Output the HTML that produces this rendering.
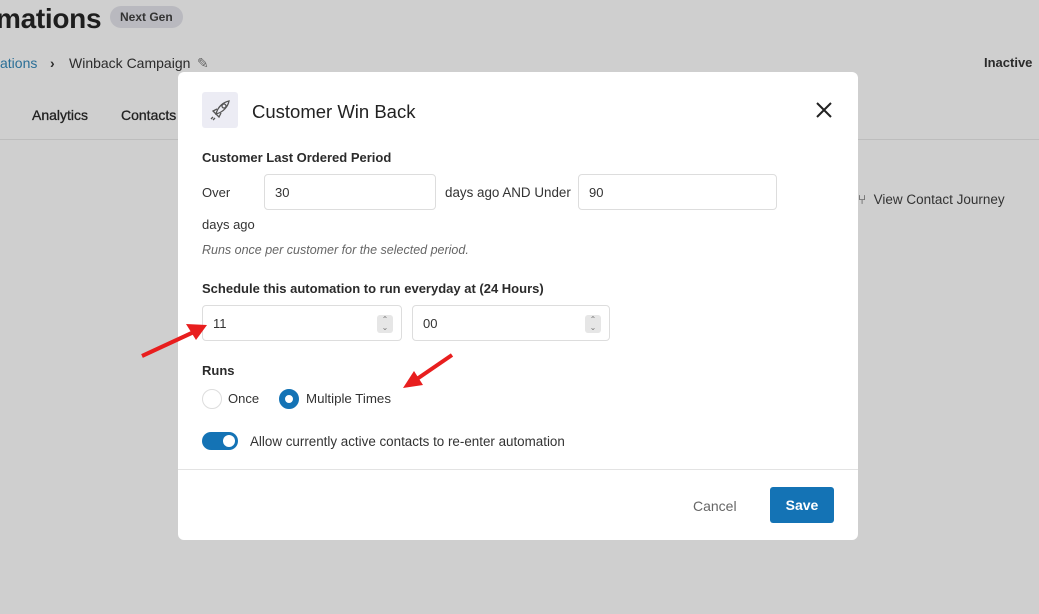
<!DOCTYPE html>
<html><head><meta charset="utf-8"><style>
*{box-sizing:border-box;margin:0;padding:0}
body{width:1039px;height:614px;overflow:hidden;background:#cfcfcf;font-family:"Liberation Sans",sans-serif;color:#2b2b2b;position:relative}
.abs{position:absolute}
.h1{left:-4px;top:3px;font-size:28px;font-weight:bold;color:#1e1e1e;letter-spacing:-0.3px}
.badge{left:110px;top:6px;background:#b9b9bf;border-radius:12px;padding:4px 10px;font-size:12px;font-weight:bold;color:#333}
.crumb{top:55px;font-size:14px}
.tabs{top:107px;font-size:14px;color:#222;-webkit-text-stroke:0.3px #222}
.hr{left:0;top:139px;width:1039px;height:1px;background:#bdbdbd}
.modal{left:178px;top:72px;width:680px;height:468px;background:#fff;border-radius:6px}
.lbl{font-size:13px;font-weight:bold;color:#2b2b2b}
.t{font-size:13px;color:#333}
.inp{border:1px solid #ddd;border-radius:4px;height:36px;font-size:13px;padding:10px 10px;color:#333}
.spin{position:absolute;right:8px;top:9px;width:16px;height:18px;background:#e6e6e6;border-radius:3px;font-size:8px;line-height:8px;text-align:center;color:#777;padding-top:1px}
</style></head><body>
<div class="abs h1">mations</div>
<div class="abs badge">Next Gen</div>
<div class="abs crumb" style="left:0;color:#2a6f97">ations</div>
<div class="abs crumb" style="left:50px;font-weight:bold">›</div>
<div class="abs crumb" style="left:69px">Winback Campaign</div>
<div class="abs crumb" style="left:197px;color:#666">✎</div>
<div class="abs" style="left:984px;top:55px;font-size:13px;font-weight:bold">Inactive</div>
<div class="abs tabs" style="left:32px">Analytics</div>
<div class="abs tabs" style="left:121px">Contacts</div>
<div class="abs hr"></div>
<div class="abs" style="left:858px;top:192px;font-size:13.5px;color:#333">⑂&nbsp; View Contact Journey</div>

<div class="abs modal">
  <div class="abs" style="left:24px;top:20px;width:36px;height:36px;background:#ececf4;border-radius:3px">
    <svg width="36" height="36" viewBox="0 0 36 36" fill="none" stroke="#555" stroke-width="1.3"><path d="M14 22 C16 14 22 10 27 9 C26 14 22 20 14 22Z"/><circle cx="22" cy="14" r="2"/><path d="M14 22l-3-3 4-2M14 22l3 3 2-4M11 25l-2 2M13 26l-2 2"/></svg>
  </div>
  <div class="abs" style="left:74px;top:29px;font-size:18.5px;color:#222">Customer Win Back</div>
  <svg class="abs" style="left:637px;top:29px" width="18" height="18" stroke="#222" stroke-width="2"><path d="M2 2L16 16M16 2L2 16"/></svg>
  <div class="abs lbl" style="left:24px;top:78px">Customer Last Ordered Period</div>
  <div class="abs t" style="left:24px;top:113px">Over</div>
  <div class="abs inp" style="left:86px;top:102px;width:172px">30</div>
  <div class="abs t" style="left:267px;top:113px;font-size:13.4px">days ago AND Under</div>
  <div class="abs inp" style="left:400px;top:102px;width:199px">90</div>
  <div class="abs t" style="left:24px;top:145px">days ago</div>
  <div class="abs" style="left:24px;top:171px;font-size:12.5px;font-style:italic;color:#666">Runs once per customer for the selected period.</div>
  <div class="abs lbl" style="left:24px;top:209px">Schedule this automation to run everyday at (24 Hours)</div>
  <div class="abs inp" style="left:24px;top:233px;width:200px">11<div class="spin">⌃<br>⌄</div></div>
  <div class="abs inp" style="left:234px;top:233px;width:198px">00<div class="spin">⌃<br>⌄</div></div>
  <div class="abs lbl" style="left:24px;top:291px">Runs</div>
  <div class="abs" style="left:24px;top:317px;width:20px;height:20px;border:1px solid #ddd;border-radius:50%"></div>
  <div class="abs t" style="left:50px;top:319px">Once</div>
  <div class="abs" style="left:101px;top:317px;width:20px;height:20px;border:6px solid #1473b5;border-radius:50%;background:#fff"></div>
  <div class="abs t" style="left:128px;top:319px;font-size:13.3px">Multiple Times</div>
  <div class="abs" style="left:24px;top:360px;width:36px;height:18px;background:#1473b5;border-radius:9px"><div style="position:absolute;right:3px;top:3px;width:12px;height:12px;background:#fff;border-radius:50%"></div></div>
  <div class="abs t" style="left:72px;top:362px;font-size:13.4px">Allow currently active contacts to re-enter automation</div>
  <div class="abs" style="left:0;top:397px;width:680px;height:1px;background:#e3e3e3"></div>
  <div class="abs" style="left:515px;top:426px;font-size:14px;color:#666">Cancel</div>
  <div class="abs" style="left:592px;top:415px;width:64px;height:36px;background:#1473b5;border-radius:3px;color:#fff;font-size:14px;font-weight:bold;text-align:center;line-height:36px">Save</div>
</div>

<svg class="abs" style="left:0;top:0" width="1039" height="614">
  <path d="M142 356 L196 331" stroke="#e81e1e" stroke-width="4"/>
  <path d="M207 325 L186 324 L196 340Z" fill="#e81e1e"/>
  <path d="M452 355 L414 381" stroke="#e81e1e" stroke-width="4"/>
  <path d="M403 388 L414 371 L423 385Z" fill="#e81e1e"/>
</svg>
</body></html>
